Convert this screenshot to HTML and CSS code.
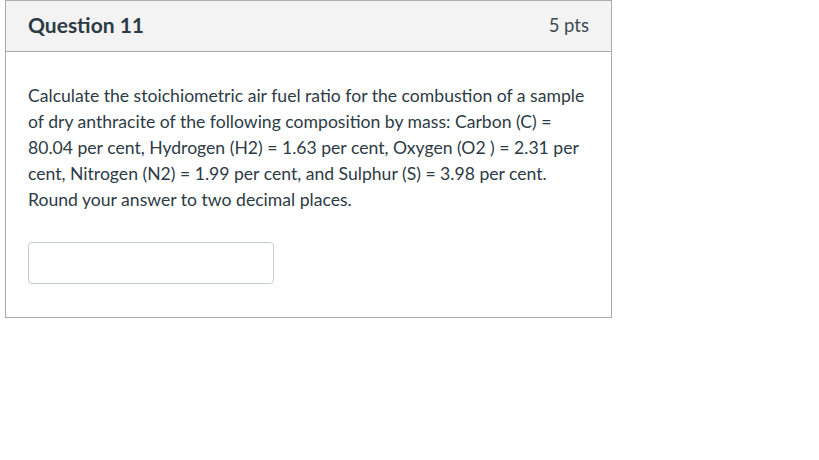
FILE: index.html
```html
<!DOCTYPE html>
<html>
<head>
<meta charset="utf-8">
<link rel="stylesheet" href="styles.css">
</head>
<body>
<div class="question">
  <div class="header">
    <span class="title">Question 11</span>
    <span class="pts">5 pts</span>
  </div>
  <div class="content">
    <p class="text">Calculate the stoichiometric air fuel ratio for the combustion of a sample of dry anthracite of the following composition by mass: Carbon (C) = 80.04 per cent, Hydrogen (H2) = 1.63 per cent, Oxygen (O2 ) = 2.31 per cent, Nitrogen (N2) = 1.99 per cent, and Sulphur (S) = 3.98 per cent. Round your answer to two decimal places.</p>
    <input class="answer" type="text">
  </div>
</div>
</body>
</html>
```
FILE: styles.css
```css
html, body {
  margin: 0;
  padding: 0;
  background: #fff;
}
body {
  font-family: Lato, "Liberation Sans", sans-serif;
  color: #2d3b45;
}
.question {
  margin-left: 5px;
  width: 607px;
  border: 1px solid #aaaaaa;
  box-sizing: border-box;
}
.header {
  display: flex;
  justify-content: space-between;
  align-items: center;
  height: 51px;
  box-sizing: border-box;
  padding: 0 22px 3px 22px;
  background: #f3f3f3;
  border-bottom: 1px solid #aaaaaa;
}
.title {
  font-size: 21px;
  font-weight: 700;
  color: #2d3b45;
}
.pts {
  font-size: 18.5px;
  font-weight: 400;
  color: #3f4a52;
}
.content {
  padding: 31px 22px 33px 22px;
}
.text {
  margin: 0;
  font-size: 17.6px;
  line-height: 26px;
  color: #2d3b45;
}
.answer {
  display: block;
  margin-top: 29px;
  width: 246px;
  height: 42px;
  box-sizing: border-box;
  border: 1px solid #c7cdd1;
  border-radius: 4px;
  padding: 0 8px;
  font-family: inherit;
  font-size: 16px;
}
```
